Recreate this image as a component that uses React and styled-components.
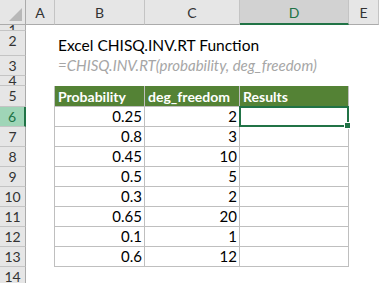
import React from "react";
import styled, { createGlobalStyle } from "styled-components";

const GlobalStyle = createGlobalStyle`
  html, body {
    margin: 0;
    padding: 0;
    background: #ffffff;
    overflow: hidden;
  }
  body {
    font-family: Lato, "Liberation Sans", sans-serif;
  }
`;

const columns = ["A", "B", "C", "D", "E"];
const rowHeights = [25, 6, 25, 20, 10, 21, 20, 20, 20, 20, 20, 20, 20, 20, 20];
const data = [
	["0.25", "2"],
	["0.8", "3"],
	["0.45", "10"],
	["0.5", "5"],
	["0.3", "2"],
	["0.65", "20"],
	["0.1", "1"],
	["0.6", "12"],
];

export default function App() {
	return (
		<>
			<GlobalStyle />
			<Sheet>
				<Corner>
					<svg width="13" height="13" viewBox="0 0 13 13">
						<polygon points="13,0 13,13 0,13" fill="#b8b8b8" />
					</svg>
				</Corner>
				{columns.map((c, i) => (
					<ColHeader key={c} $col={i + 2} $selected={c === "D"}>{c}</ColHeader>
				))}

				{rowHeights.slice(1).map((h, i) => (
					<RowHeader key={i} $row={i + 2} $selected={i + 1 === 6}>
						<RowNum $short={h < 20}>{i + 1}</RowNum>
					</RowHeader>
				))}

				<Title $row={3}>Excel CHISQ.INV.RT Function</Title>
				<Formula $row={4}>=CHISQ.INV.RT(probability, deg_freedom)</Formula>

				<TableCell $row={6} $col={3} $head $first>Probability</TableCell>
				<TableCell $row={6} $col={4} $head>deg_freedom</TableCell>
				<TableCell $row={6} $col={5} $head>Results</TableCell>

				{data.map((r, i) => (
					<React.Fragment key={i}>
						<TableCell $row={i + 7} $col={3} $first $num>{r[0]}</TableCell>
						<TableCell $row={i + 7} $col={4} $num>{r[1]}</TableCell>
						<TableCell $row={i + 7} $col={5} $active={i === 0} />
					</React.Fragment>
				))}
			</Sheet>
		</>
	);
}

const Sheet = styled.div`
	display: grid;
	grid-template-columns: 26px 29px 90px 95px 109px 1fr;
	grid-template-rows: ${rowHeights.map((h) => h + "px").join(" ")};
	width: 379px;
	height: 283px;
	overflow: hidden;
	background: #ffffff;
`;
const Corner = styled.div`
	grid-row: 1;
	grid-column: 1;
	box-sizing: border-box;
	background: #e6e6e6;
	border-right: 1px solid #ababab;
	border-bottom: 1px solid #ababab;
	display: flex;
	align-items: flex-end;
	justify-content: flex-end;
	padding: 0 3px 3px 0;
`;
const ColHeader = styled.div`
	grid-row: 1;
	grid-column: ${(p) => p.$col};
	box-sizing: border-box;
	background: ${(p) => (p.$selected ? "#d2d2d2" : "#e6e6e6")};
	color: ${(p) => (p.$selected ? "#217346" : "#333333")};
	border-right: 1px solid #c4c4c4;
	border-bottom: ${(p) => (p.$selected ? "2px solid #217346" : "1px solid #ababab")};
	display: flex;
	align-items: center;
	justify-content: center;
	font-size: 14px;
	padding-top: 1px;
`;
const RowHeader = styled.div`
	grid-row: ${(p) => p.$row};
	grid-column: 1;
	box-sizing: border-box;
	background: ${(p) => (p.$selected ? "#9fd5b7" : "#e6e6e6")};
	color: ${(p) => (p.$selected ? "#217346" : "#333333")};
	border-right: ${(p) => (p.$selected ? "2px solid #217346" : "1px solid #ababab")};
	border-bottom: 1px solid #c4c4c4;
	overflow: hidden;
	display: flex;
	justify-content: center;
	align-items: flex-start;
	font-size: 14px;
`;
const RowNum = styled.span`
	line-height: ${(p) => (p.$short ? "12px" : "16px")};
	margin-top: ${(p) => (p.$short ? "-1px" : "2px")};
`;
const Title = styled.div`
	grid-row: ${(p) => p.$row};
	grid-column: 3 / 7;
	align-self: end;
	padding: 0 0 2px 3px;
	font-size: 15.5px;
	color: #000000;
	white-space: nowrap;
`;
const Formula = styled(Title)`
	font-size: 15px;
	font-style: italic;
	color: #a6a6a6;
`;
const TableCell = styled.div`
	grid-row: ${(p) => p.$row};
	grid-column: ${(p) => p.$col};
	position: relative;
	box-sizing: border-box;
	background: ${(p) => (p.$head ? "#548235" : "#ffffff")};
	color: ${(p) => (p.$head ? "#ffffff" : "#000000")};
	font-weight: ${(p) => (p.$head ? 700 : 400)};
	font-size: ${(p) => (p.$head ? "14px" : "15px")};
	border-right: 1px solid #bfbfbf;
	border-bottom: 1px solid #bfbfbf;
	border-left: ${(p) => (p.$first ? "1px solid #bfbfbf" : "none")};
	margin-left: ${(p) => (p.$first ? "-1px" : "0")};
	display: flex;
	align-items: flex-end;
	justify-content: ${(p) => (p.$num ? "flex-end" : "flex-start")};
	padding: 0 2px 1px 3px;
	white-space: nowrap;

	${(p) =>
		p.$active &&
		`
		&::after {
			content: "";
			position: absolute;
			left: -1px;
			top: -1px;
			right: -1px;
			bottom: -1px;
			border: 2px solid #217346;
		}
		&::before {
			content: "";
			position: absolute;
			right: -3px;
			bottom: -3px;
			width: 5px;
			height: 5px;
			background: #217346;
			border: 1px solid #ffffff;
			z-index: 1;
		}
	`}
`;
